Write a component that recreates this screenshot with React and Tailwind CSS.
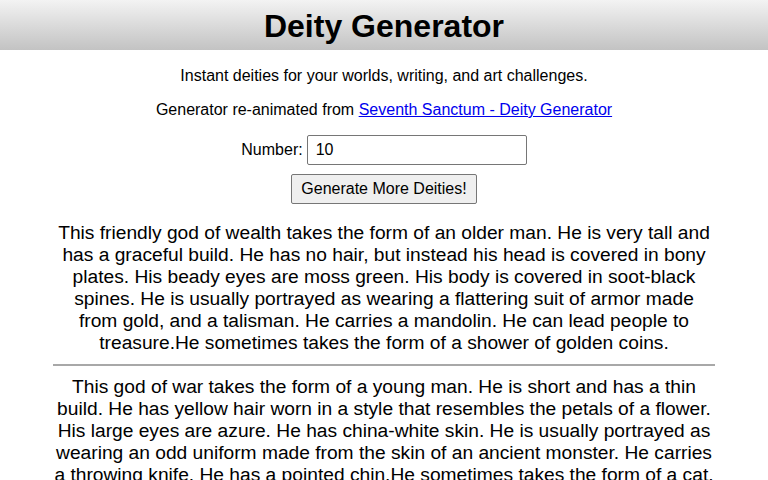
import React from "react";

const deities = [
  "This friendly god of wealth takes the form of an older man. He is very tall and has a graceful build. He has no hair, but instead his head is covered in bony plates. His beady eyes are moss green. His body is covered in soot-black spines. He is usually portrayed as wearing a flattering suit of armor made from gold, and a talisman. He carries a mandolin. He can lead people to treasure.He sometimes takes the form of a shower of golden coins.",
  "This god of war takes the form of a young man. He is short and has a thin build. He has yellow hair worn in a style that resembles the petals of a flower. His large eyes are azure. He has china-white skin. He is usually portrayed as wearing an odd uniform made from the skin of an ancient monster. He carries a throwing knife. He has a pointed chin.He sometimes takes the form of a cat.",
];

export default function App() {
  return (
    <div className="min-h-screen bg-white text-black font-['Liberation_Sans',Arial,sans-serif] text-[16px]">
      <header className="h-[50px] flex items-center justify-center bg-gradient-to-b from-[#f3f3f3] to-[#c3c3c3]">
        <h1 className="text-[32px] font-bold leading-none mt-[2px]">Deity Generator</h1>
      </header>

      <p className="mt-[17px] text-center leading-[18px]">
        Instant deities for your worlds, writing, and art challenges.
      </p>
      <p className="mt-4 text-center leading-[18px]">
        Generator re-animated from{" "}
        <a href="#" className="text-[#0000ee] underline">
          Seventh Sanctum - Deity Generator
        </a>
      </p>

      <form className="mt-4 flex flex-col items-center gap-[9px]">
        <div className="flex items-center gap-[4px]">
          <label className="leading-[18px]">Number:</label>
          <input
            type="text"
            defaultValue="10"
            className="w-[220px] h-[30px] border border-[#767676] rounded-[2px] px-[8px] text-[16px] outline-none"
          />
        </div>
        <button
          type="button"
          className="h-[30px] px-[9px] bg-[#efefef] border border-[#767676] rounded-[2px] text-[16px] leading-none"
        >
          Generate More Deities!
        </button>
      </form>

      <div className="w-[662px] mx-auto mt-[18px]">
        {deities.map((d, i) => (
          <div key={i}>
            {i > 0 && <hr className="my-[10px] border-0 border-t-2 border-[#a8a8a8]" />}
            <p className="text-center text-[19.2px] leading-[22px]">{d}</p>
          </div>
        ))}
      </div>
    </div>
  );
}
